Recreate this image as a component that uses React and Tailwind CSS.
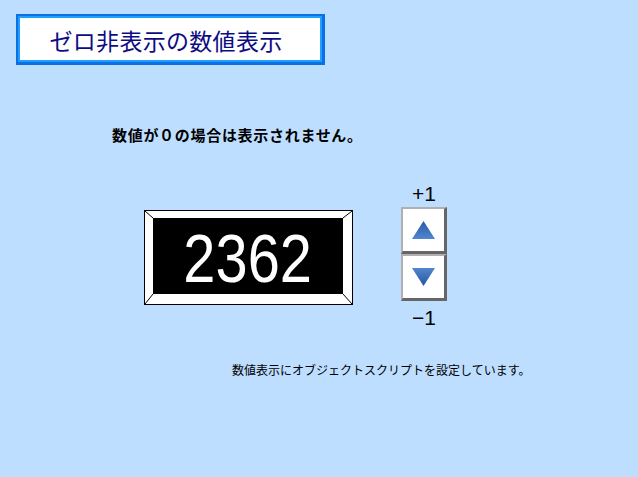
import React from "react";

const jp = { fontFamily: '"Noto Sans CJK JP", "Noto Sans", sans-serif' };
const latin = { fontFamily: '"Liberation Sans", Arial, sans-serif' };

const Triangle = ({ down }) => (
  <svg width="23" height="18" viewBox="0 0 23 18">
    <defs>
      <linearGradient id={down ? "gd" : "gu"} x1="0" y1="0" x2="0" y2="1">
        <stop offset="0" stopColor={down ? "#5486cc" : "#2a5aa8"} />
        <stop offset="1" stopColor={down ? "#2455a6" : "#5086cf"} />
      </linearGradient>
    </defs>
    <polygon
      points={down ? "0,0 23,0 11.5,18" : "11.5,0 23,18 0,18"}
      fill={`url(#${down ? "gd" : "gu"})`}
    />
  </svg>
);

const StepButton = ({ down }) => (
  <button
    type="button"
    className="w-[46px] h-[47px] bg-white flex items-center justify-center border-t-2 border-l-2 border-t-[#b0b0b0] border-l-[#b0b0b0] border-r-[3px] border-b-[3px] border-r-[#666666] border-b-[#666666]"
  >
    <Triangle down={down} />
  </button>
);

const NumberDisplay = ({ value }) => (
  <div className="relative w-[209px] h-[95px] border border-black bg-white pl-[8px] pt-[7px] pr-[9px] pb-[10px]">
    <div className="w-full h-full bg-black flex items-center justify-center overflow-hidden">
      <span
        className="text-white text-[68px] leading-none scale-x-[0.85] mt-[3px]"
        style={latin}
      >
        {value}
      </span>
    </div>
    <svg
      className="absolute inset-0 pointer-events-none"
      width="207"
      height="93"
      viewBox="0 0 207 93"
    >
      <g stroke="#000" strokeWidth="1">
        <line x1="0" y1="0" x2="8" y2="7" />
        <line x1="207" y1="0" x2="198" y2="7" />
        <line x1="0" y1="93" x2="8" y2="83" />
        <line x1="207" y1="93" x2="198" y2="83" />
      </g>
    </svg>
  </div>
);

export default function App() {
  return (
    <div className="w-[638px] h-[477px] bg-[#bedeff] overflow-hidden flex flex-col">
      {/* title */}
      <div className="mt-[14px] ml-[16px] w-[309px] h-[51px] border-2 border-r-[3px] border-b-[3px] border-[#0c6fe6]">
        <div className="w-full h-full border-2 border-[#1ea0ff] bg-white flex items-center justify-center pr-[8px]">
          <span className="text-[23px] leading-none text-[#0c0c84] mt-[2px] tracking-[0.3px]" style={jp}>
            ゼロ非表示の数値表示
          </span>
        </div>
      </div>

      <div
        className="mt-[62px] ml-[112px] text-[15px] leading-[15px] font-bold text-black tracking-[0.7px]"
        style={jp}
      >
        数値が０の場合は表示されません。
      </div>

      <div className="mt-[42px] flex items-start">
        <div className="ml-[144px] mt-[26px]">
          <NumberDisplay value="2362" />
        </div>
        <div className="ml-[48px] w-[46px] flex flex-col items-center">
          <div className="text-[21px] leading-[20px] text-black" style={latin}>
            +1
          </div>
          <div className="mt-[3px] flex flex-col">
            <StepButton />
            <StepButton down />
          </div>
          <div className="mt-[7px] text-[21px] leading-[20px] text-black" style={latin}>
            −1
          </div>
        </div>
      </div>

      <div className="mt-[36px] ml-[232px] text-[12px] leading-[12px] text-black" style={jp}>
        数値表示にオブジェクトスクリプトを設定しています。
      </div>
    </div>
  );
}
